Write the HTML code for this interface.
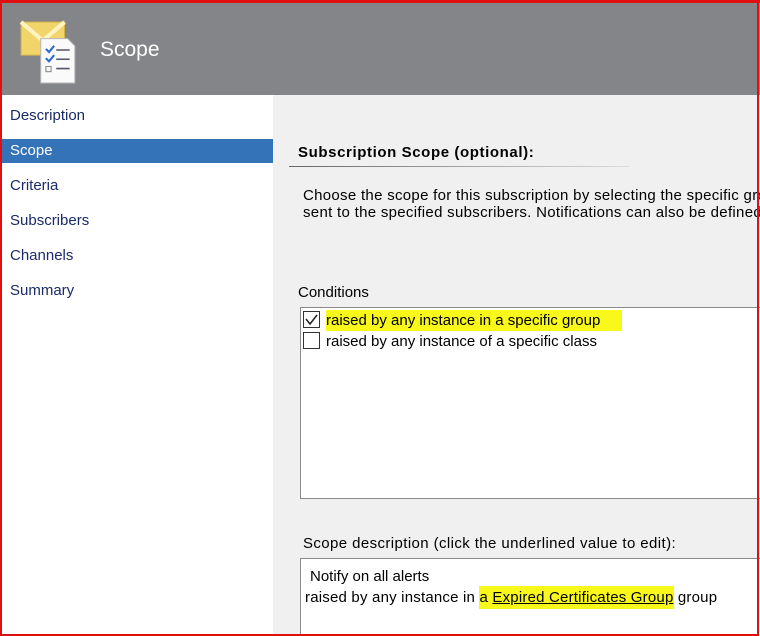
<!DOCTYPE html>
<html><head><style>
*{margin:0;padding:0;box-sizing:border-box}
body{width:760px;height:636px;overflow:hidden;background:#f0f0f0;font-family:"Liberation Sans",sans-serif;font-size:15px;color:#000;position:relative}
.frame{position:absolute;left:0;top:0;width:759px;height:636px;border:2px solid #e01010;pointer-events:none;z-index:10}
.hdr{position:absolute;left:0;top:0;width:760px;height:95px;background:#838588;border-top:3px solid #e01010}
.hdr .t{position:absolute;left:100px;top:35px;color:#fff;font-size:21px}
.nav{position:absolute;left:0;top:95px;width:273px;height:541px;background:#fff}
.nav div{position:absolute;left:10px;font-size:15px;color:#1a2a6a}
.nav .sel{left:2px;width:271px;top:44px;height:24px;background:#3473b7;color:#fff;padding-left:8px;line-height:24px}
.main{position:absolute;left:273px;top:95px;right:0;bottom:0;overflow:hidden}
.txt{position:absolute;white-space:nowrap}
.box{position:absolute;background:#fff;border:1px solid #8a8a8a}
.cb{display:inline-block;width:17px;height:17px;border:1px solid #333;vertical-align:-3px;margin-right:6px;background:#fff;position:relative}
.hl{background:#f8f81a}
</style></head><body>
<div class="hdr">
<svg style="position:absolute;left:18px;top:14px" width="62" height="68" viewBox="0 0 60 64">
<rect x="3" y="4" width="42" height="32" fill="#f1d56a" stroke="#d8b44a"/>
<path d="M3 4 L24 22 L45 4" fill="none" stroke="#fff4c0" stroke-width="4"/>
<path d="M22 20 H48 L55 27 V63 H22 Z" fill="#fafafa" stroke="#b8b8b8"/>
<path d="M27 30 l3 3 l5 -6 M27 39 l3 3 l5 -6" stroke="#2c6ad0" stroke-width="2" fill="none"/>
<rect x="27" y="47" width="5" height="5" fill="none" stroke="#888"/>
<path d="M37 31 H50 M37 40 H50 M37 49 H50" stroke="#556" stroke-width="1.5"/>
</svg>
<div class="t">Scope</div>
</div>
<div class="nav">
<div style="top:12px">Description</div>
<div class="sel">Scope</div>
<div style="top:82px">Criteria</div>
<div style="top:117px">Subscribers</div>
<div style="top:152px">Channels</div>
<div style="top:187px">Summary</div>
</div>
<div class="main">
<div class="txt" style="left:25px;top:49px;font-weight:bold;font-size:15px;letter-spacing:0.6px">Subscription Scope (optional):</div>
<div style="position:absolute;left:16px;top:71px;width:340px;height:1px;background:linear-gradient(90deg,#666,#ddd)"></div>
<div class="txt" style="left:30px;top:92px;line-height:17px;letter-spacing:0.3px">Choose the scope for this subscription by selecting the specific group<br>sent to the specified subscribers. Notifications can also be defined</div>
<div class="txt" style="left:25px;top:189px">Conditions</div>
<div class="box" style="left:27px;top:212px;width:500px;height:192px">
<div class="txt" style="left:2px;top:3px"><span class="cb"><svg width="15" height="15" style="position:absolute;left:0;top:0"><path d="M2 7 L6 12 L13 3" stroke="#222" stroke-width="1.5" fill="none"/></svg></span><span class="hl" style="padding:2px 22px 2px 0">raised by any instance in a specific group</span></div>
<div class="txt" style="left:2px;top:24px"><span class="cb"></span>raised by any instance of a specific class</div>
</div>
<div class="txt" style="left:30px;top:440px;letter-spacing:0.4px">Scope description (click the underlined value to edit):</div>
<div class="box" style="left:27px;top:463px;width:500px;height:100px">
<div class="txt" style="left:9px;top:9px">Notify on all alerts</div>
<div class="txt" style="left:4px;top:30px;letter-spacing:0.2px">raised by any instance in <span class="hl" style="padding:3px 0">a <u>Expired Certificates Group</u></span> group</div>
</div>
</div>
<div class="frame"></div>
</body></html>
